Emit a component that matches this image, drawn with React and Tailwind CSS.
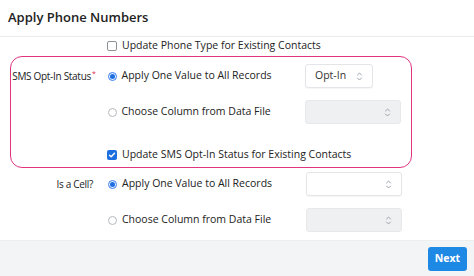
import React from "react";

function Chevrons() {
  return (
    <svg width="7" height="11" viewBox="0 0 7 11" fill="none" stroke="#9ca3af" strokeWidth="1" strokeLinecap="round" strokeLinejoin="round">
      <path d="M1.5 4 L3.5 2 L5.5 4" />
      <path d="M1.5 7 L3.5 9 L5.5 7" />
    </svg>
  );
}

function Select({ value, disabled, className }) {
  return (
    <div
      className={
        "h-[24px] rounded-[3px] border flex items-center justify-between pl-[9px] pr-[9px] text-[10.5px] text-[#333] " +
        (disabled
          ? "bg-[#eef0f2] border-[#e6e8ea]"
          : "bg-white border-[#e3e5e8] shadow-[0_1px_1px_rgba(0,0,0,0.04)]") +
        " " +
        className
      }
    >
      <span>{value}</span>
      <Chevrons />
    </div>
  );
}

function Radio({ checked }) {
  return (
    <span
      className={
        "w-[9px] h-[9px] rounded-full border flex items-center justify-center shrink-0 " +
        (checked ? "border-[#3b82f6] bg-[#e8f0fe]" : "border-[#b5b9be] bg-white")
      }
    >
      {checked && <span className="w-[5px] h-[5px] rounded-full bg-[#1d6fe0]" />}
    </span>
  );
}

function Checkbox({ checked }) {
  return checked ? (
    <span className="w-[10px] h-[10px] rounded-[2px] bg-[#1d6fe0] flex items-center justify-center shrink-0">
      <svg width="8" height="8" viewBox="0 0 8 8" fill="none" stroke="white" strokeWidth="1.4" strokeLinecap="round" strokeLinejoin="round">
        <path d="M1.5 4.2 L3.2 5.8 L6.5 2.2" />
      </svg>
    </span>
  ) : (
    <span className="w-[10px] h-[10px] rounded-[2px] border border-[#8e9297] bg-white shrink-0" />
  );
}

function OptionRow({ label, required, checked, text, select }) {
  return (
    <div className="flex items-center h-[24px]">
      <div className="w-[84.5px] text-right text-[10px] tracking-[-0.3px] text-[#222] whitespace-nowrap">
        <span className={required ? "" : "pr-[3px]"}>{label}</span>
        {required && <sup className="text-[#e11d48] text-[7px] ml-[1px]">*</sup>}
      </div>
      <div className="w-[197.5px] ml-[12px] flex items-center gap-[5px]">
        <Radio checked={checked} />
        <span className="text-[10.5px] text-[#222] whitespace-nowrap">{text}</span>
      </div>
      {select}
    </div>
  );
}

export default function App() {
  return (
    <div className="w-[474px] h-[276px] bg-white flex flex-col overflow-hidden" style={{ fontFamily: "'Open Sans', 'Noto Sans', sans-serif" }}>
      <div className="h-[37px] shrink-0 border-b border-[#e9ebee] flex items-center px-[8px]">
        <h1 className="text-[13px] font-semibold text-[#222]">Apply Phone Numbers</h1>
      </div>

      <div className="flex-1 pt-[1px]">
        <div className="flex items-center gap-[5px] pl-[107px] h-[16px]">
          <Checkbox />
          <span className="text-[10.5px] text-[#222]">Update Phone Type for Existing Contacts</span>
        </div>

        <div className="ml-[10px] w-[402px] mt-[2px] h-[112px] border-[1.5px] border-[#e0347f] rounded-[12px] pt-[7px]">
          <OptionRow
            label="SMS Opt-In Status"
            required
            checked
            text="Apply One Value to All Records"
            select={<Select value="Opt-In" className="w-[68px]" />}
          />
          <div className="h-[12px]" />
          <OptionRow
            label=""
            text="Choose Column from Data File"
            select={<Select value="" disabled className="w-[96px]" />}
          />
          <div className="flex items-center gap-[5px] pl-[96px] mt-[24px] h-[14px]">
            <Checkbox checked />
            <span className="text-[10.5px] text-[#222]">Update SMS Opt-In Status for Existing Contacts</span>
          </div>
        </div>

        <div className="mt-[4px] pl-[11.5px]">
          <OptionRow
            label="Is a Cell?"
            checked
            text="Apply One Value to All Records"
            select={<Select value="" className="w-[96px]" />}
          />
          <div className="h-[12px]" />
          <OptionRow
            label=""
            text="Choose Column from Data File"
            select={<Select value="" disabled className="w-[96px]" />}
          />
        </div>
      </div>

      <div className="h-[36px] shrink-0 bg-[#f3f4f6] border-t border-[#eceef0] flex items-center justify-end pr-[7px]">
        <button className="h-[24px] w-[39px] rounded-[3px] bg-[#1e88e5] text-white text-[10.5px] font-bold">Next</button>
      </div>
    </div>
  );
}
